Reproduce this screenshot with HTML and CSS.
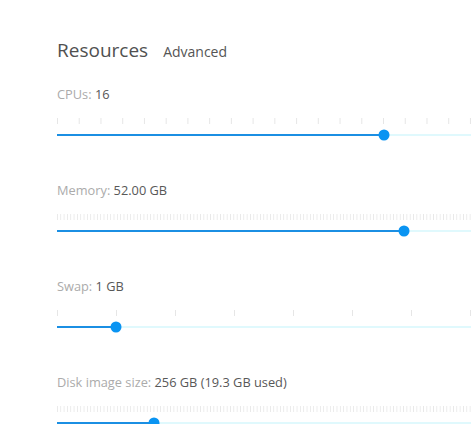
FILE: index.html
```html
<!DOCTYPE html>
<html>
<head>
<meta charset="utf-8">
<link rel="stylesheet" href="styles.css">
</head>
<body>
<main class="panel">
  <header class="head">
    <h1 class="title">Resources</h1>
    <span class="tab">Advanced</span>
  </header>

  <section class="setting">
    <div class="label">CPUs: <span class="value">16</span></div>
    <div class="ticks ticks-cpu"></div>
    <div class="track">
      <div class="fill" style="width: 78.9%"></div>
      <div class="thumb" style="left: 78.9%"></div>
    </div>
  </section>

  <section class="setting">
    <div class="label">Memory: <span class="value">52.00 GB</span></div>
    <div class="ticks ticks-dense"></div>
    <div class="track">
      <div class="fill" style="width: 83.8%"></div>
      <div class="thumb" style="left: 83.8%"></div>
    </div>
  </section>

  <section class="setting">
    <div class="label">Swap: <span class="value">1 GB</span></div>
    <div class="ticks ticks-swap"></div>
    <div class="track">
      <div class="fill" style="width: 14.3%"></div>
      <div class="thumb" style="left: 14.3%"></div>
    </div>
  </section>

  <section class="setting">
    <div class="label">Disk image size: <span class="value">256 GB (19.3 GB used)</span></div>
    <div class="ticks ticks-dense"></div>
    <div class="track">
      <div class="fill" style="width: 23.5%"></div>
      <div class="thumb" style="left: 23.5%"></div>
    </div>
  </section>
</main>
</body>
</html>
```

FILE: styles.css
```css
html, body {
  margin: 0;
  padding: 0;
  background: #ffffff;
}

body {
  font-family: "Open Sans", "Liberation Sans", sans-serif;
  color: #555;
}

.panel {
  display: flex;
  flex-direction: column;
  padding: 38px 0 0 57px;
  gap: 46px;
}

.head {
  display: flex;
  align-items: baseline;
  gap: 15px;
  height: 24px;
  margin-bottom: -22px;
}

.title {
  margin: 0;
  font-size: 19px;
  line-height: 24px;
  font-weight: 400;
  color: #505050;
}

.tab {
  font-size: 14px;
  line-height: 24px;
  color: #555;
}

.setting {
  display: flex;
  flex-direction: column;
  width: 414px;
}

.label {
  font-size: 12.8px;
  line-height: 16px;
  color: #ababab;
}

.value {
  color: #585858;
}

.ticks {
  margin-top: 16px;
  height: 6px;
  width: 414px;
  background-repeat: repeat-x;
}

.ticks-cpu {
  background-image: linear-gradient(to right, #e6e6e6 1px, transparent 1px);
  background-size: 21.74px 100%;
}

.ticks-swap {
  background-image: linear-gradient(to right, #e6e6e6 1px, transparent 1px);
  background-size: 59px 100%;
}

.ticks-dense {
  background-image: linear-gradient(to right, #e8e8e8 1px, transparent 1px);
  background-size: 3.33px 100%;
}

.track {
  position: relative;
  margin-top: 10px;
  height: 2px;
  background: #e0f9fd;
}

.fill {
  height: 2px;
  background: #1b8fe3;
}

.thumb {
  position: absolute;
  top: 50%;
  width: 11px;
  height: 11px;
  border-radius: 50%;
  background: #0a94f2;
  transform: translate(-50%, -50%);
}
```
